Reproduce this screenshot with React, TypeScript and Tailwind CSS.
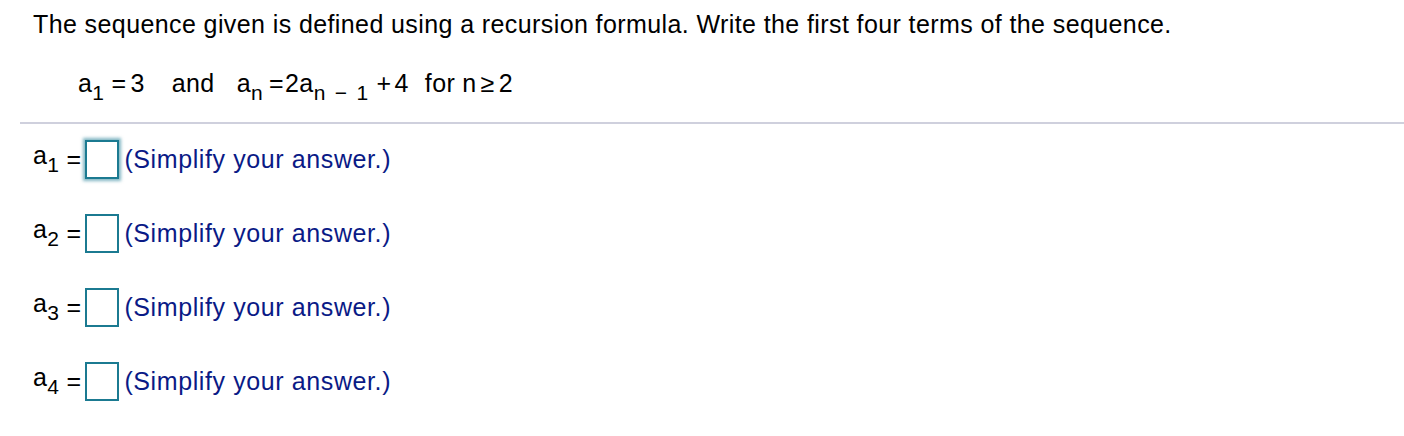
import type { ReactNode } from 'react';

const FONT = "font-['Liberation_Sans',Arial,sans-serif]";

function Sub({ children }: { children: ReactNode }) {
  return <span className="text-[21px] align-[-8px]">{children}</span>;
}

function AnswerRow({ n, focused }: { n: number; focused?: boolean }) {
  return (
    <div className="flex items-center h-[74px] pl-[33px]">
      <span className="text-black">
        a<Sub>{n}</Sub>
      </span>
      <span className="ml-[7px] mr-[4px] text-black">=</span>
      <div
        className={`w-[34px] h-[39px] border-2 border-[#1b7a91] bg-white ${
          focused ? 'shadow-[0_0_3px_2px_rgba(27,122,145,0.55)]' : ''
        }`}
      />
      <span className="ml-[5px] text-[#0a1a86] tracking-[0.6px]">(Simplify your answer.)</span>
    </div>
  );
}

export default function App() {
  return (
    <div className={`h-[436px] w-full bg-white ${FONT} text-[25px] leading-none tracking-[0.4px]`}>
      <div className="h-[25px] mt-[12px] pl-[33px] text-black">
        The sequence given is defined using a recursion formula. Write the first four terms of the sequence.
      </div>

      <div className="h-[25px] mt-[34px] pl-[78px] text-black whitespace-nowrap">
        <span>a</span>
        <Sub>1</Sub>
        <span className="ml-[7px]">=</span>
        <span className="ml-[4px]">3</span>
        <span className="ml-[27px]">and</span>
        <span className="ml-[22px]">a</span>
        <Sub>n</Sub>
        <span className="ml-[6px]">=</span>
        <span className="ml-[1px]">2a</span>
        <Sub>
          <span>n</span>
          <span className="ml-[9px]">−</span>
          <span className="ml-[9px]">1</span>
        </Sub>
        <span className="ml-[8px]">+</span>
        <span className="ml-[3px]">4</span>
        <span className="ml-[16px]">for</span>
        <span className="ml-[7px]">n</span>
        <span className="ml-[4px]">≥</span>
        <span className="ml-[4px]">2</span>
      </div>

      <div className="mt-[26px] ml-[20px] h-[2px] bg-[#cfd0dd]" />

      <div className="-mt-[2px]">
        <AnswerRow n={1} focused />
        <AnswerRow n={2} />
        <AnswerRow n={3} />
        <AnswerRow n={4} />
      </div>
    </div>
  );
}
